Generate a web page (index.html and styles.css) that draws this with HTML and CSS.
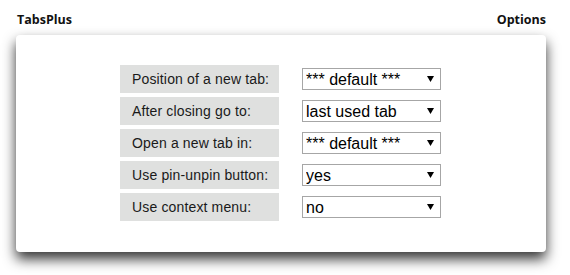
FILE: index.html
```html
<!DOCTYPE html>
<html>
<head>
<meta charset="utf-8">
<link rel="stylesheet" href="styles.css">
</head>
<body>
<div class="page">
  <div class="header">
    <span class="title">TabsPlus</span>
    <span class="title">Options</span>
  </div>
  <div class="card">
    <div class="grid">
      <div class="label">Position of a new tab:</div>
      <div class="field"><div class="sel"><select><option>*** default ***</option></select><svg class="arrow" width="7" height="6" viewBox="0 0 7 6"><path d="M0 0H7L3.5 6Z" fill="#000"/></svg></div></div>
      <div class="label">After closing go to:</div>
      <div class="field"><div class="sel"><select><option>last used tab</option></select><svg class="arrow" width="7" height="6" viewBox="0 0 7 6"><path d="M0 0H7L3.5 6Z" fill="#000"/></svg></div></div>
      <div class="label">Open a new tab in:</div>
      <div class="field"><div class="sel"><select><option>*** default ***</option></select><svg class="arrow" width="7" height="6" viewBox="0 0 7 6"><path d="M0 0H7L3.5 6Z" fill="#000"/></svg></div></div>
      <div class="label">Use pin-unpin button:</div>
      <div class="field"><div class="sel"><select><option>yes</option></select><svg class="arrow" width="7" height="6" viewBox="0 0 7 6"><path d="M0 0H7L3.5 6Z" fill="#000"/></svg></div></div>
      <div class="label">Use context menu:</div>
      <div class="field"><div class="sel"><select><option>no</option></select><svg class="arrow" width="7" height="6" viewBox="0 0 7 6"><path d="M0 0H7L3.5 6Z" fill="#000"/></svg></div></div>
    </div>
  </div>
</div>
</body>
</html>
```
FILE: styles.css
```css
html, body {
  margin: 0;
  padding: 0;
  background: #fff;
}
.page {
  width: 530px;
  padding: 12px 24px 23px 16px;
}
.header {
  display: flex;
  justify-content: space-between;
  height: 23px;
  padding: 0 0 0 1px;
}
.title {
  font-family: "Open Sans", sans-serif;
  font-weight: 700;
  font-size: 12.5px;
  color: #111;
  line-height: 16px;
}
.card {
  background: #fff;
  border-radius: 4px;
  box-shadow: 0 7px 13px rgba(0, 0, 0, 0.8);
  height: 217px;
  box-sizing: border-box;
  padding: 30px 0 0 104px;
  display: flex;
}
.grid {
  display: grid;
  grid-template-columns: 159px 158px;
  gap: 4px;
  align-content: start;
  grid-auto-rows: 28px;
}
.label {
  background: #dfe0df;
  font-family: "Liberation Sans", Arial, sans-serif;
  font-size: 14px;
  letter-spacing: 0.15px;
  color: #1a1a1a;
  padding-left: 12px;
  display: flex;
  align-items: center;
}
.field {
  display: flex;
  align-items: center;
  padding-left: 19px;
}
.sel {
  position: relative;
  width: 139px;
  height: 22px;
}
.sel select {
  appearance: none;
  -webkit-appearance: none;
  width: 100%;
  height: 100%;
  box-sizing: border-box;
  border: 1px solid #a6a6a6;
  border-radius: 0;
  background: #fff;
  font-family: "Liberation Sans", Arial, sans-serif;
  font-size: 16px;
  color: #000;
  padding: 0 0 0 3px;
  margin: 0;
}
.arrow {
  position: absolute;
  right: 7px;
  top: 8px;
  pointer-events: none;
}
```
